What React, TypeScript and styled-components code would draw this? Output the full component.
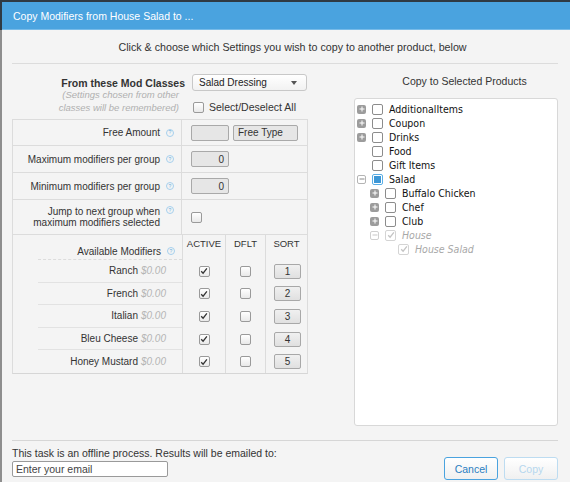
import React from 'react'
import styled, { createGlobalStyle } from 'styled-components'

const GlobalStyle = createGlobalStyle`
  html, body {
    margin: 0;
    padding: 0;
    overflow: hidden;
  }
  body {
    background: linear-gradient(#2f3a43 0, #2f3a43 30px, #8e8e8e 30px);
    font-family: "Liberation Sans", Arial, sans-serif;
    color: #333;
  }
`

interface Modifier {
  name: string
  price: string
  active: boolean
  sort: number
}

const modifiers: Modifier[] = [
  { name: 'Ranch', price: '$0.00', active: true, sort: 1 },
  { name: 'French', price: '$0.00', active: true, sort: 2 },
  { name: 'Italian', price: '$0.00', active: true, sort: 3 },
  { name: 'Bleu Cheese', price: '$0.00', active: true, sort: 4 },
  { name: 'Honey Mustard', price: '$0.00', active: true, sort: 5 },
]

type Expand = 'plus' | 'minus' | 'none'
type Check = 'off' | 'partial' | 'disabled'

interface TreeItem {
  label: string
  depth: number
  expand: Expand
  check: Check
}

const tree: TreeItem[] = [
  { label: 'AdditionalItems', depth: 0, expand: 'plus', check: 'off' },
  { label: 'Coupon', depth: 0, expand: 'plus', check: 'off' },
  { label: 'Drinks', depth: 0, expand: 'plus', check: 'off' },
  { label: 'Food', depth: 0, expand: 'none', check: 'off' },
  { label: 'Gift Items', depth: 0, expand: 'none', check: 'off' },
  { label: 'Salad', depth: 0, expand: 'minus', check: 'partial' },
  { label: 'Buffalo Chicken', depth: 1, expand: 'plus', check: 'off' },
  { label: 'Chef', depth: 1, expand: 'plus', check: 'off' },
  { label: 'Club', depth: 1, expand: 'plus', check: 'off' },
  { label: 'House', depth: 1, expand: 'minus', check: 'disabled' },
  { label: 'House Salad', depth: 2, expand: 'none', check: 'disabled' },
]

const CheckMark = ({ color = '#333' }: { color?: string }) => (
  <svg width='8' height='8' viewBox='0 0 8 8'>
    <path d='M1.2 4.2 L3.1 6.2 L6.9 1.4' fill='none' stroke={color} strokeWidth='1.3' />
  </svg>
)

const App: React.FC = () => {
  return (
    <>
      <GlobalStyle />
      <Dialog>
        <Header>Copy Modifiers from House Salad to ...</Header>
        <Content>
          <Intro>Click &amp; choose which Settings you wish to copy to another product, below</Intro>
          <Main>
            <LeftColumn>
              <TopGrid>
                <ClassLabel>From these Mod Classes</ClassLabel>
                <Select>
                  Salad Dressing
                  <Caret />
                </Select>
                <Note>
                  (Settings chosen from other
                  <br />
                  classes will be remembered)
                </Note>
                <SelectAll>
                  <Box />
                  Select/Deselect All
                </SelectAll>
              </TopGrid>

              <Table>
                <Row $height={26}>
                  <LabelCell>
                    Free Amount
                    <Help>?</Help>
                  </LabelCell>
                  <ValueCell>
                    <Field $width={38} />
                    <Field $width={65} $align='left'>
                      Free Type
                    </Field>
                  </ValueCell>
                </Row>
                <Row $height={27}>
                  <LabelCell>
                    Maximum modifiers per group
                    <Help>?</Help>
                  </LabelCell>
                  <ValueCell>
                    <Field $width={38}>0</Field>
                  </ValueCell>
                </Row>
                <Row $height={27}>
                  <LabelCell>
                    Minimum modifiers per group
                    <Help>?</Help>
                  </LabelCell>
                  <ValueCell>
                    <Field $width={38}>0</Field>
                  </ValueCell>
                </Row>
                <Row $height={35}>
                  <LabelCell $top>
                    <span>
                      Jump to next group when
                      <br />
                      maximum modifiers selected
                    </span>
                    <Help>?</Help>
                  </LabelCell>
                  <ValueCell>
                    <Box />
                  </ValueCell>
                </Row>

                <ModGrid>
                  <ModHeadName>
                    Available Modifiers
                    <Help>?</Help>
                  </ModHeadName>
                  <ColHead>ACTIVE</ColHead>
                  <ColHead>DFLT</ColHead>
                  <ColHead>SORT</ColHead>
                  {modifiers.map((m, i) => (
                    <React.Fragment key={m.name}>
                      <ModName $last={i === modifiers.length - 1}>
                        {m.name} <Price>{m.price}</Price>
                      </ModName>
                      <ModCell>
                        <Box>{m.active && <CheckMark />}</Box>
                      </ModCell>
                      <ModCell>
                        <Box />
                      </ModCell>
                      <ModCell>
                        <SortButton>{m.sort}</SortButton>
                      </ModCell>
                    </React.Fragment>
                  ))}
                </ModGrid>
              </Table>
            </LeftColumn>

            <RightColumn>
              <PanelTitle>Copy to Selected Products</PanelTitle>
              <TreeBox>
                {tree.map((t) => (
                  <TreeRow key={t.label} $depth={t.depth}>
                    <Expander $kind={t.expand} $muted={t.check === 'disabled'} />
                    <TreeCheck $state={t.check}>
                      {t.check === 'partial' && <Fill />}
                      {t.check === 'disabled' && <CheckMark color='#c4c4c4' />}
                    </TreeCheck>
                    <TreeLabel $muted={t.check === 'disabled'}>{t.label}</TreeLabel>
                  </TreeRow>
                ))}
              </TreeBox>
            </RightColumn>
          </Main>

          <Footer>
            <FooterLeft>
              <FooterText>This task is an offline process. Results will be emailed to:</FooterText>
              <EmailInput placeholder='Enter your email' />
            </FooterLeft>
            <Buttons>
              <Button>Cancel</Button>
              <Button $disabled>Copy</Button>
            </Buttons>
          </Footer>
        </Content>
      </Dialog>
    </>
  )
}

const Dialog = styled.div`
  margin: 2px 0 0 2px;
  width: 568px;
  height: 480px;
  overflow: hidden;
  background: #f4f4f4;
`
const Header = styled.div`
  box-sizing: border-box;
  height: 28px;
  display: flex;
  align-items: center;
  padding-left: 11px;
  background: #4aa3df;
  border-bottom: 1px solid #78bbe8;
  color: #fff;
  font-size: 10.5px;
`
const Content = styled.div`
  width: 546px;
  padding-left: 10px;
`
const Intro = styled.div`
  padding: 11px 0 10px 15px;
  line-height: 12px;
  text-align: center;
  font-size: 10.7px;
  color: #333;
  border-bottom: 1px solid #dcdcdc;
`
const Main = styled.div`
  display: flex;
`
const LeftColumn = styled.div`
  width: 296px;
`
const TopGrid = styled.div`
  display: grid;
  grid-template-columns: 173px 115px;
  column-gap: 7px;
  margin-top: 10px;
`
const ClassLabel = styled.div`
  align-self: center;
  text-align: right;
  font-size: 10.5px;
  font-weight: bold;
  color: #333;
`
const Select = styled.div`
  box-sizing: border-box;
  height: 17px;
  display: flex;
  align-items: center;
  justify-content: space-between;
  padding: 0 9px 0 6px;
  font-size: 10px;
  color: #222;
  background: linear-gradient(#ffffff, #f2f2f2);
  border: 1px solid #c8c8c8;
  border-radius: 3px;
`
const Caret = styled.span`
  width: 0;
  height: 0;
  border-left: 3.5px solid transparent;
  border-right: 3.5px solid transparent;
  border-top: 4px solid #555;
`
const Note = styled.div`
  margin-top: -3px;
  padding-right: 6px;
  text-align: right;
  font-size: 9.5px;
  line-height: 13px;
  font-style: italic;
  color: #b0b0b0;
`
const SelectAll = styled.label`
  align-self: end;
  display: flex;
  align-items: center;
  gap: 5px;
  padding-left: 1px;
  height: 14px;
  font-size: 10.5px;
  color: #333;
`
const Box = styled.span`
  box-sizing: border-box;
  width: 11px;
  height: 11px;
  display: inline-flex;
  align-items: center;
  justify-content: center;
  background: linear-gradient(#ffffff, #e9e9e9);
  border: 1px solid #9a9a9a;
  border-radius: 2px;
`
const Table = styled.div`
  margin-top: 5px;
  border: 1px solid #dcdcdc;
  border-bottom-color: #d6d6d6;
`
const Row = styled.div<{ $height: number }>`
  box-sizing: border-box;
  display: grid;
  grid-template-columns: 169px 1fr;
  height: ${(p) => p.$height}px;
  border-bottom: 1px solid #dcdcdc;
`
const LabelCell = styled.div<{ $top?: boolean }>`
  display: flex;
  justify-content: flex-end;
  align-items: ${(p) => (p.$top ? 'flex-start' : 'center')};
  gap: 6px;
  padding: ${(p) => (p.$top ? '6px 7px 0 0' : '0 7px 0 0')};
  border-right: 1px solid #dcdcdc;
  font-size: 10px;
  line-height: 11px;
  color: #333;
  text-align: right;
`
const Help = styled.span`
  box-sizing: border-box;
  width: 8px;
  height: 8px;
  flex: none;
  display: inline-flex;
  align-items: center;
  justify-content: center;
  border: 1px solid #a6d0ee;
  border-radius: 50%;
  font-size: 5px;
  line-height: 1;
  color: #6db0e0;
`
const ValueCell = styled.div`
  display: flex;
  align-items: center;
  gap: 4px;
  padding-left: 9px;
`
const Field = styled.div<{ $width: number; $align?: 'left' | 'right' }>`
  box-sizing: border-box;
  width: ${(p) => p.$width}px;
  height: 16px;
  display: flex;
  align-items: center;
  justify-content: ${(p) => (p.$align === 'left' ? 'flex-start' : 'flex-end')};
  padding: 0 4px;
  background: #e6e6e6;
  border: 1px solid #a9a9a9;
  border-radius: 2px;
  font-size: 10px;
  color: #333;
`
const ModGrid = styled.div`
  display: grid;
  grid-template-columns: 169px 43px 40px 1fr;
  grid-template-rows: 25px repeat(5, 22.6px);
`
const ModHeadName = styled.div`
  display: flex;
  justify-content: flex-end;
  align-items: center;
  gap: 6px;
  margin-left: 25px;
  padding: 8px 7px 0 0;
  border-bottom: 1px dashed #dcdcdc;
  font-size: 10px;
  color: #333;
`
const ColHead = styled.div`
  padding-top: 3px;
  text-align: center;
  font-size: 9.5px;
  color: #333;
  border-left: 1px solid #dcdcdc;
`
const ModName = styled.div<{ $last: boolean }>`
  display: flex;
  justify-content: flex-end;
  align-items: center;
  gap: 3px;
  margin-left: 25px;
  padding-right: 16px;
  border-bottom: ${(p) => (p.$last ? 'none' : '1px solid #e2e2e2')};
  font-size: 10px;
  color: #333;
`
const Price = styled.span`
  font-style: italic;
  color: #b5b5b5;
`
const ModCell = styled.div`
  display: flex;
  align-items: center;
  justify-content: center;
  border-left: 1px solid #dcdcdc;
`
const SortButton = styled.span`
  box-sizing: border-box;
  width: 27px;
  height: 15px;
  margin-left: 2px;
  display: flex;
  align-items: center;
  justify-content: center;
  background: linear-gradient(#f0f0f0, #e0e0e0);
  border: 1px solid #a8a8a8;
  border-radius: 2px;
  font-size: 10px;
  color: #333;
`
const RightColumn = styled.div`
  padding-left: 46px;
`
const PanelTitle = styled.div`
  margin-top: 11px;
  padding-left: 17px;
  line-height: 13px;
  text-align: center;
  font-size: 10.5px;
  color: #333;
`
const TreeBox = styled.div`
  box-sizing: border-box;
  width: 204px;
  height: 328px;
  margin-top: 10px;
  padding: 3px 0 0 2px;
  background: #fff;
  border: 1px solid #d8d8d8;
  border-radius: 3px;
`
const TreeRow = styled.div<{ $depth: number }>`
  display: flex;
  align-items: center;
  height: 14px;
  padding-left: ${(p) => p.$depth * 13}px;
`
const Expander = styled.span<{ $kind: Expand; $muted: boolean }>`
  position: relative;
  box-sizing: border-box;
  width: 9px;
  height: 9px;
  margin-right: 6px;
  flex: none;
  border-radius: 2px;
  visibility: ${(p) => (p.$kind === 'none' ? 'hidden' : 'visible')};
  background: ${(p) => (p.$kind === 'plus' ? '#9c9c9c' : '#fff')};
  border: ${(p) => (p.$kind === 'plus' ? 'none' : `1px solid ${p.$muted ? '#d0d0d0' : '#b4b4b4'}`)};
  &::before {
    content: '';
    position: absolute;
    left: 50%;
    top: 50%;
    width: 5px;
    height: 1px;
    transform: translate(-50%, -50%);
    background: ${(p) => (p.$kind === 'plus' ? '#fff' : p.$muted ? '#c8c8c8' : '#8a8a8a')};
  }
  &::after {
    content: '';
    display: ${(p) => (p.$kind === 'plus' ? 'block' : 'none')};
    position: absolute;
    left: 50%;
    top: 50%;
    width: 1px;
    height: 5px;
    transform: translate(-50%, -50%);
    background: #fff;
  }
`
const TreeCheck = styled.span<{ $state: Check }>`
  box-sizing: border-box;
  width: 11px;
  height: 11px;
  margin-right: 6px;
  flex: none;
  display: flex;
  align-items: center;
  justify-content: center;
  background: #fff;
  border: 1px solid
    ${(p) => (p.$state === 'partial' ? '#5aaee6' : p.$state === 'disabled' ? '#d4d4d4' : '#8c8c8c')};
  border-radius: 2px;
`
const Fill = styled.span`
  width: 7px;
  height: 7px;
  background: #3d97d6;
`
const TreeLabel = styled.span<{ $muted: boolean }>`
  font-family: "DejaVu Sans Condensed", "DejaVu Sans", Verdana, sans-serif;
  font-size: 10.5px;
  white-space: nowrap;
  font-style: ${(p) => (p.$muted ? 'italic' : 'normal')};
  color: ${(p) => (p.$muted ? '#a8a8a8' : '#111')};
`
const Footer = styled.div`
  display: flex;
  justify-content: space-between;
  align-items: flex-end;
  margin-top: 14px;
  border-top: 1px solid #d6d6d6;
`
const FooterLeft = styled.div`
  padding: 6px 0 3px;
`
const FooterText = styled.div`
  line-height: 12px;
  font-size: 10.5px;
  color: #333;
`
const EmailInput = styled.input`
  box-sizing: border-box;
  display: block;
  width: 156px;
  height: 16px;
  margin-top: 2px;
  padding: 0 3px;
  background: #fff;
  border: 1px solid #9a9a9a;
  border-radius: 2px;
  font-family: "Liberation Sans", Arial, sans-serif;
  font-size: 10.5px;
  outline: none;
  &::placeholder {
    color: #444;
  }
`
const Buttons = styled.div`
  display: flex;
  gap: 6px;
`
const Button = styled.button<{ $disabled?: boolean }>`
  box-sizing: border-box;
  width: 54px;
  height: 23px;
  padding: 0;
  background: linear-gradient(#ffffff, #f0f0f0);
  border: 1px solid ${(p) => (p.$disabled ? '#bddcf1' : '#4aa3df')};
  border-radius: 3px;
  font-family: "Liberation Sans", Arial, sans-serif;
  font-size: 10.5px;
  color: ${(p) => (p.$disabled ? '#b6d7ee' : '#2a7ec1')};
`

export default App
